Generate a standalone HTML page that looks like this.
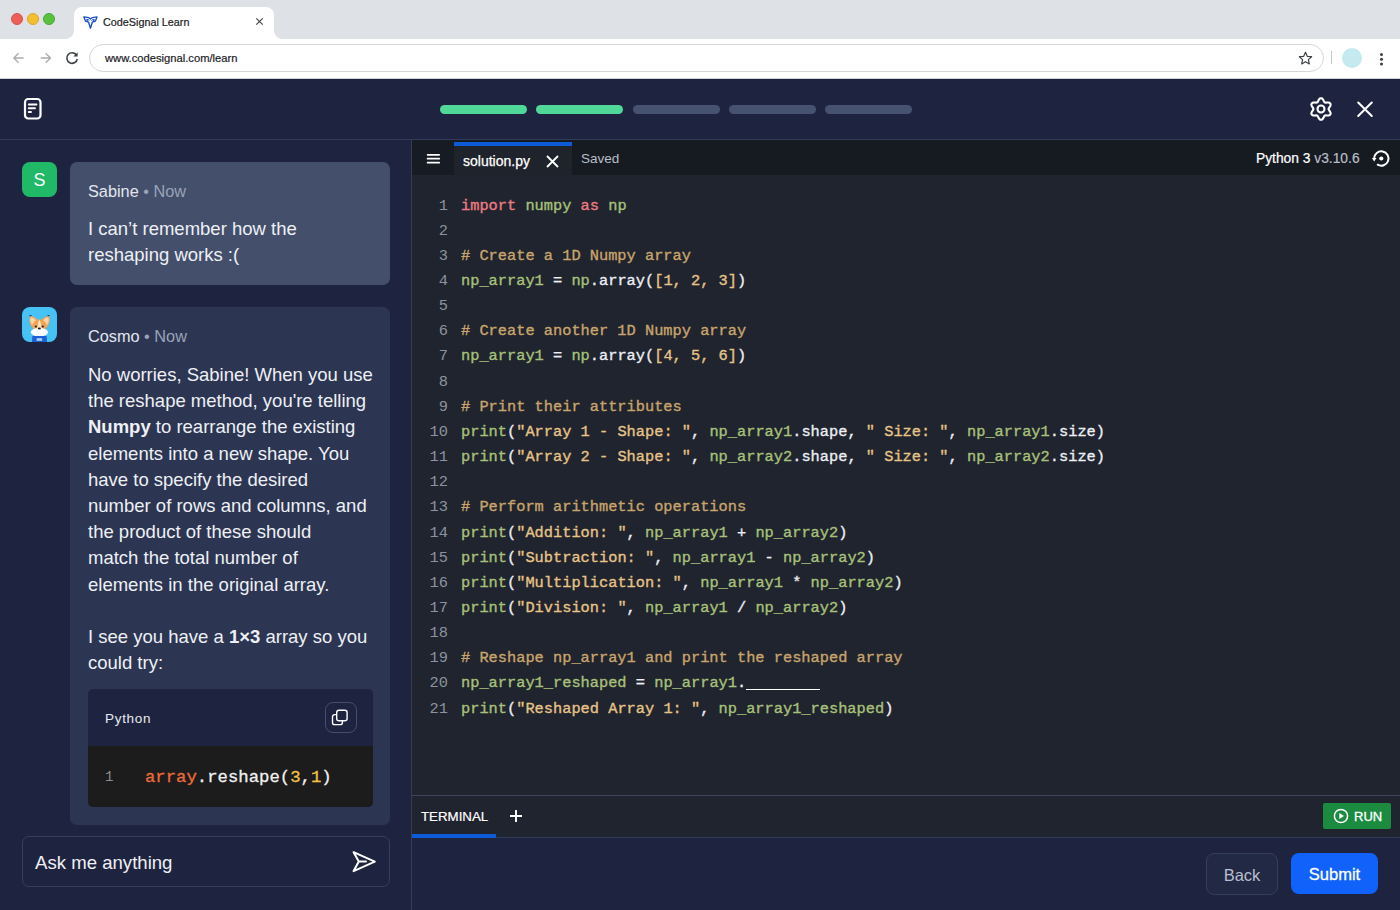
<!DOCTYPE html>
<html><head><meta charset="utf-8">
<style>
*{box-sizing:border-box;margin:0;padding:0}
html,body{width:1400px;height:910px;overflow:hidden;background:#1e2440;font-family:"Liberation Sans",sans-serif}
.abs{position:absolute}
#chrome{position:absolute;left:0;top:0;width:1400px;height:79px;background:#dee1e6}
#toolbar{position:absolute;left:0;top:39px;width:1400px;height:40px;border-bottom:1px solid #cfd2d6}
#tbbg{position:absolute;left:0;top:39px;width:1400px;height:40px;background:#fff}
.dot{position:absolute;width:12px;height:12px;border-radius:50%;top:12.5px}
#tab{position:absolute;left:74px;top:7px;width:200px;height:32px;background:#fff;border-radius:8px 8px 0 0}
#url{position:absolute;left:89px;top:44px;width:1235px;height:28px;border:1px solid #d5d7da;border-radius:14px;background:#fff}
#hdr{position:absolute;left:0;top:79px;width:1400px;height:61px;background:#1e2440;border-bottom:1px solid #323b5a}
.bar{position:absolute;top:105px;width:87px;height:9px;border-radius:5px;background:#475270}
.bar.g{background:#50d899}
#left{position:absolute;left:0;top:140px;width:412px;height:770px;background:#1e2440;border-right:1px solid #363d54}
.av{position:absolute;left:22px;width:35px;height:35px;border-radius:8px}
.bub{position:absolute;left:70px;width:320px;border-radius:7px}
.name{position:absolute;left:18px;font-size:16.3px;color:#e3e6ee;white-space:nowrap}
.name span{color:#9aa3b8}
.msg{position:absolute;left:18px;font-size:18.5px;color:#eef0f5;line-height:26.2px;white-space:nowrap}
#editor{position:absolute;left:412px;top:140px;width:988px;height:655px;background:#1f242e}
#etabs{position:absolute;left:0;top:0;width:988px;height:35px;background:#161a21}
.code{position:absolute;left:0;top:191px;font-family:"Liberation Mono",monospace;font-size:15.33px;line-height:25.15px;white-space:pre}
.ln{position:absolute;left:412px;width:36px;text-align:right;color:#8b919c;font-family:"Liberation Mono",monospace;font-size:15.33px}
#term{position:absolute;left:412px;top:795px;width:988px;height:43px;background:#1f242e;border-top:1px solid #3d455e;border-bottom:1px solid #323b5a}
</style></head><body>
<div id="chrome">
  <div class="dot" style="left:10.5px;background:#ed5f57;border:0.5px solid #d9534c"></div>
  <div class="dot" style="left:27px;background:#f5bd30;border:0.5px solid #dea528"></div>
  <div class="dot" style="left:43px;background:#5ac13c;border:0.5px solid #4aa734"></div>
  <div id="tab">
    <svg class="abs" style="left:9px;top:9px" width="15" height="14" viewBox="0 0 15 14"><path d="M0.9 0.9 L5.8 1.7 L7.45 3.1 L9.1 1.7 L14 0.9 L12.4 5.1 L9.3 6.2 L7.45 12.2 L5.6 6.2 L2.5 5.1 Z" fill="none" stroke="#1b4fc4" stroke-width="1.35" stroke-linejoin="round"/><path d="M6.4 4.6 Q5 2.9 3.6 3.6 Q3.4 4.9 5 4.9 M8.5 4.6 Q9.9 2.9 11.3 3.6 Q11.5 4.9 9.9 4.9" fill="none" stroke="#1b4fc4" stroke-width="1"/></svg>
    <div class="abs" style="left:29px;top:9px;font-size:10.8px;color:#202124;-webkit-text-stroke:0.2px #202124;white-space:nowrap">CodeSignal Learn</div>
    <svg class="abs" style="left:181px;top:10px" width="9" height="9" viewBox="0 0 9 9"><path d="M1.3 1.3L7.7 7.7M7.7 1.3L1.3 7.7" stroke="#3c4043" stroke-width="1.1"/></svg>
  </div>
</div>
<div id="tbbg"></div>
<div class="abs" style="left:66px;top:31px;width:8px;height:8px;background:radial-gradient(circle at 0 0,#dee1e6 7.5px,#fff 8px)"></div>
<div class="abs" style="left:274px;top:31px;width:8px;height:8px;background:radial-gradient(circle at 100% 0,#dee1e6 7.5px,#fff 8px)"></div>
<div id="url"><div class="abs" style="left:15px;top:7px;font-size:11.2px;color:#202124;white-space:nowrap;-webkit-text-stroke:0.2px #202124">www.codesignal.com/learn</div></div>
<div id="toolbar">
  <svg class="abs" style="left:11px;top:12px" width="14" height="14" viewBox="0 0 14 14"><path d="M12.6 7H2.8M7.6 2.2L2.8 7L7.6 11.8" fill="none" stroke="#a8abaf" stroke-width="1.3"/></svg>
  <svg class="abs" style="left:39px;top:12px" width="14" height="14" viewBox="0 0 14 14"><path d="M1.7 7H11.5M6.7 2.2L11.5 7L6.7 11.8" fill="none" stroke="#a8abaf" stroke-width="1.3"/></svg>
  <svg class="abs" style="left:65px;top:12px" width="14" height="14" viewBox="0 0 14 14"><path d="M11.6 4.2 A5.3 5.3 0 1 0 12.3 8" fill="none" stroke="#3c4043" stroke-width="1.6"/><path d="M12.6 1.2 V5.4 H8.4 Z" fill="#3c4043"/></svg>
  <svg class="abs" style="left:1298px;top:12px" width="15" height="15" viewBox="0 0 15 15"><path d="M7.5 1.3 L9.3 5.3 L13.6 5.7 L10.4 8.6 L11.3 12.9 L7.5 10.7 L3.7 12.9 L4.6 8.6 L1.4 5.7 L5.7 5.3 Z" fill="none" stroke="#3c4043" stroke-width="1.2" stroke-linejoin="round"/></svg>
  <div class="abs" style="left:1331px;top:12px;width:1px;height:13px;background:#c4c7ca"></div>
  <div class="abs" style="left:1342px;top:9px;width:20px;height:20px;border-radius:50%;background:#c4eaef"></div>
  <div class="abs" style="left:1380px;top:13.5px;width:3px;height:3px;border-radius:50%;background:#3c4043;box-shadow:0 4.7px 0 #3c4043,0 9.4px 0 #3c4043"></div>
</div>

<div id="hdr">
  <svg class="abs" style="left:22px;top:18px" width="22" height="24" viewBox="0 0 22 24"><rect x="3" y="2" width="15.5" height="19.5" rx="3.2" fill="none" stroke="#fff" stroke-width="2.2"/><path d="M6.8 7.5H14.5M6.8 11.3H13M6.8 15H9" stroke="#fff" stroke-width="1.9" stroke-linecap="round"/></svg>
  <svg class="abs" style="left:1307px;top:16.3px" width="28" height="28" viewBox="0 0 28 28"><path d="M21.60 14.00 L21.67 13.60 L21.86 13.17 L22.16 12.71 L22.52 12.19 L22.89 11.62 L23.22 11.00 L23.47 10.37 L23.59 9.73 L23.55 9.13 L23.35 8.60 L22.99 8.16 L22.49 7.83 L21.88 7.62 L21.20 7.51 L20.51 7.49 L19.83 7.53 L19.20 7.58 L18.65 7.60 L18.18 7.56 L17.80 7.42 L17.49 7.16 L17.22 6.78 L16.96 6.29 L16.69 5.72 L16.38 5.11 L16.02 4.52 L15.59 3.98 L15.10 3.56 L14.56 3.29 L14.00 3.20 L13.44 3.29 L12.90 3.56 L12.41 3.98 L11.98 4.52 L11.62 5.11 L11.31 5.72 L11.04 6.29 L10.78 6.78 L10.51 7.16 L10.20 7.42 L9.82 7.56 L9.35 7.60 L8.80 7.58 L8.17 7.53 L7.49 7.49 L6.80 7.51 L6.12 7.62 L5.51 7.83 L5.01 8.16 L4.65 8.60 L4.45 9.13 L4.41 9.73 L4.53 10.37 L4.78 11.00 L5.11 11.62 L5.48 12.19 L5.84 12.71 L6.14 13.17 L6.33 13.60 L6.40 14.00 L6.33 14.40 L6.14 14.83 L5.84 15.29 L5.48 15.81 L5.11 16.38 L4.78 17.00 L4.53 17.63 L4.41 18.27 L4.45 18.87 L4.65 19.40 L5.01 19.84 L5.51 20.17 L6.12 20.38 L6.80 20.49 L7.49 20.51 L8.17 20.47 L8.80 20.42 L9.35 20.40 L9.82 20.44 L10.20 20.58 L10.51 20.84 L10.78 21.22 L11.04 21.71 L11.31 22.28 L11.62 22.89 L11.98 23.48 L12.41 24.02 L12.90 24.44 L13.44 24.71 L14.00 24.80 L14.56 24.71 L15.10 24.44 L15.59 24.02 L16.02 23.48 L16.38 22.89 L16.69 22.28 L16.96 21.71 L17.22 21.22 L17.49 20.84 L17.80 20.58 L18.18 20.44 L18.65 20.40 L19.20 20.42 L19.83 20.47 L20.51 20.51 L21.20 20.49 L21.88 20.38 L22.49 20.17 L22.99 19.84 L23.35 19.40 L23.55 18.87 L23.59 18.27 L23.47 17.63 L23.22 17.00 L22.89 16.38 L22.52 15.81 L22.16 15.29 L21.86 14.83 L21.67 14.40Z" fill="none" stroke="#fff" stroke-width="2.1" stroke-linejoin="round"/><circle cx="14" cy="14" r="3.5" fill="none" stroke="#fff" stroke-width="2.1"/></svg>
  <svg class="abs" style="left:1354px;top:19.3px" width="22" height="22" viewBox="0 0 22 22"><path d="M4.2 4.5L17.8 18M17.8 4.5L4.2 18" stroke="#fff" stroke-width="2" stroke-linecap="round"/></svg>
</div>
<div class="bar g" style="left:440px"></div>
<div class="bar g" style="left:536.3px"></div>
<div class="bar" style="left:632.6px"></div>
<div class="bar" style="left:728.9px"></div>
<div class="bar" style="left:825.2px"></div>
<div id="left">
  <div class="av" style="top:22px;background:#20b968"><div class="abs" style="left:0;width:35px;top:8px;text-align:center;color:#fff;font-size:18px">S</div></div>
  <div class="bub" style="top:22px;height:123px;background:#434f6b">
    <div class="name" style="top:20px">Sabine <span>&bull; Now</span></div>
    <div class="msg" style="top:54px">I can&rsquo;t remember how the<br>reshaping works :(</div>
  </div>
  <div class="av" style="top:167px;background:#46c3f4;overflow:hidden">
    <svg width="35" height="35" viewBox="0 0 35 35">
      <path d="M8.1 8.5 Q5.6 15 10.7 21 L15.8 12.8 Q12.2 9.4 8.1 8.5 Z" fill="#f0a455"/>
      <path d="M26.9 8.5 Q29.4 15 24.3 21 L19.2 12.8 Q22.8 9.4 26.9 8.5 Z" fill="#f0a455"/>
      <path d="M8.8 10.3 Q7.2 15 10.8 18.8 L13.8 13.2 Q11.6 10.9 8.8 10.3 Z" fill="#fcd6a8"/>
      <path d="M26.2 10.3 Q27.8 15 24.2 18.8 L21.2 13.2 Q23.4 10.9 26.2 10.3 Z" fill="#fcd6a8"/>
      <path d="M7.6 9.2 Q8.2 8 9.6 8.8 M27.4 9.2 Q26.8 8 25.4 8.8" stroke="#263f7e" stroke-width="1.1" fill="none"/>
      <ellipse cx="17.5" cy="19" rx="7.2" ry="6.4" fill="#f0a455"/>
      <path d="M17.5 12.6 Q15.6 16 15.4 21.5 L19.6 21.5 Q19.4 16 17.5 12.6 Z" fill="#fde6c8"/>
      <ellipse cx="17.4" cy="25.2" rx="8.6" ry="4.2" fill="#fff"/>
      <circle cx="13.9" cy="19.5" r="1.1" fill="#1d1d1d"/><circle cx="20.8" cy="19.5" r="1.1" fill="#1d1d1d"/>
      <ellipse cx="17.4" cy="21.5" rx="1.5" ry="1.05" fill="#1d1d1d"/>
      <path d="M10 35 L10.4 28.9 L24.6 28.9 L25 35 Z" fill="#1d5fd4"/>
      <rect x="14.6" y="31.2" width="5.6" height="2.6" rx="0.6" fill="#b5d3ff"/>
    </svg>
  </div>
  <div class="bub" style="top:167px;height:518px;background:#2c3652">
    <div class="name" style="top:20px">Cosmo <span>&bull; Now</span></div>
    <div class="msg" style="top:55px">No worries, Sabine! When you use<br>the reshape method, you're telling<br><b>Numpy</b> to rearrange the existing<br>elements into a new shape. You<br>have to specify the desired<br>number of rows and columns, and<br>the product of these should<br>match the total number of<br>elements in the original array.<br><br>I see you have a <b>1&times;3</b> array so you<br>could try:</div>
    <div class="abs" style="left:18px;top:382px;width:285px;height:118px;border-radius:5px;overflow:hidden;background:#1e2440">
      <div class="abs" style="left:17px;top:21.5px;font-size:13.5px;color:#e8eaf0;letter-spacing:0.7px">Python</div>
      <div class="abs" style="left:237px;top:13px;width:32px;height:31px;border:1px solid #454e6a;border-radius:8px">
        <svg class="abs" style="left:4px;top:5px" width="20" height="20" viewBox="0 0 20 20"><rect x="2.5" y="6.6" width="9.9" height="10" rx="2.2" fill="none" stroke="#fff" stroke-width="1.4"/><rect x="6.7" y="2.3" width="10.4" height="10.4" rx="2.2" fill="#1e2440" stroke="#fff" stroke-width="1.4"/></svg>
      </div>
      <div class="abs" style="left:0;top:57px;width:285px;height:61px;background:#1c1c1d">
        <div class="abs" style="left:17px;top:23px;font-family:'Liberation Mono',monospace;font-size:14px;color:#8a8d93">1</div>
        <div class="abs" style="left:57px;top:22px;font-family:'Liberation Mono',monospace;font-size:17.3px;color:#f0f0f0;white-space:pre;-webkit-text-stroke:0.3px currentColor"><span style="color:#ea6c38">array</span>.reshape(<span style="color:#f5c04a">3</span>,<span style="color:#f5c04a">1</span>)</div>
      </div>
    </div>
  </div>
  <div class="abs" style="left:22px;top:696px;width:368px;height:51px;border:1px solid #353e5c;border-radius:7px;background:#1e2440">
    <div class="abs" style="left:12px;top:14.5px;font-size:18.6px;color:#eef0f5">Ask me anything</div>
    <svg class="abs" style="left:327px;top:13px" width="28" height="26" viewBox="0 0 28 26"><path d="M3.6 2.2 L24.8 11.6 L3.6 21.1 L8.8 11.6 Z M8.8 11.6 H16" fill="none" stroke="#fff" stroke-width="2" stroke-linejoin="round" stroke-linecap="round"/></svg>
  </div>
</div>
<div id="editor"><div id="etabs">
  <div class="abs" style="left:0;top:0;width:41px;height:35px;background:#171b23"></div>
  <svg class="abs" style="left:14px;top:13px" width="15" height="12" viewBox="0 0 15 12"><path d="M1.6 1.8H13.2M1.6 5.7H13.2M1.6 9.7H13.2" stroke="#fff" stroke-width="1.7" stroke-linecap="round"/></svg>
  <div class="abs" style="left:42px;top:2px;width:118px;height:33px;background:#1e232c"></div>
  <div class="abs" style="left:42px;top:2px;width:118px;height:4px;background:#0e5bd8"></div>
  <div class="abs" style="left:51px;top:12.5px;font-size:14px;color:#fff;white-space:nowrap;-webkit-text-stroke:0.25px #fff">solution.py</div>
  <svg class="abs" style="left:133px;top:13.5px" width="15" height="15" viewBox="0 0 15 15"><path d="M2 2L13 13M13 2L2 13" stroke="#fff" stroke-width="1.8"/></svg>
  <div class="abs" style="left:169px;top:11px;font-size:13.5px;color:#b9bec8;white-space:nowrap">Saved</div>
  <div class="abs" style="left:844px;top:11px;font-size:13.8px;color:#fff;white-space:nowrap;-webkit-text-stroke:0.2px currentColor">Python 3 <span style="color:#b9bec8">v3.10.6</span></div>
  <svg class="abs" style="left:958px;top:8px" width="22" height="22" viewBox="0 0 22 22"><path d="M7.7 16.7 A7.2 7.2 0 1 0 4.13 10.4" fill="none" stroke="#fff" stroke-width="2" stroke-linecap="round"/><path d="M1.9 9.9 L6.5 9.9 L4.15 13.6 Z" fill="#fff"/><circle cx="11.3" cy="10.5" r="2.1" fill="#fff"/></svg>
</div>
  <div class="abs" style="left:0;top:53.5px;width:36px;text-align:right;white-space:pre;font-family:'Liberation Mono',monospace;font-size:15.33px;line-height:25.15px;color:#8d939e">1
2
3
4
5
6
7
8
9
10
11
12
13
14
15
16
17
18
19
20
21</div>
  <div class="abs" style="left:49px;top:53.5px;white-space:pre;font-family:'Liberation Mono',monospace;-webkit-text-stroke:0.35px currentColor;font-size:15.33px;line-height:25.15px;color:#eceff4"><span style="color:#ee7b82">import</span> <span style="color:#a8c17a">numpy</span> <span style="color:#ee7b82">as</span> <span style="color:#a8c17a">np</span>

<span style="color:#c9a46c"># Create a 1D Numpy array</span>
<span style="color:#a8c17a">np_array1</span><span style="color:#eceff4"> = </span><span style="color:#a8c17a">np</span><span style="color:#eceff4">.array(</span><span style="color:#e6c387">[1, 2, 3]</span><span style="color:#eceff4">)</span>

<span style="color:#c9a46c"># Create another 1D Numpy array</span>
<span style="color:#a8c17a">np_array1</span><span style="color:#eceff4"> = </span><span style="color:#a8c17a">np</span><span style="color:#eceff4">.array(</span><span style="color:#e6c387">[4, 5, 6]</span><span style="color:#eceff4">)</span>

<span style="color:#c9a46c"># Print their attributes</span>
<span style="color:#a8c17a">print</span><span style="color:#eceff4">(</span><span style="color:#e6c387">"Array 1 - Shape: "</span><span style="color:#eceff4">, </span><span style="color:#a8c17a">np_array1</span><span style="color:#eceff4">.shape, </span><span style="color:#e6c387">" Size: "</span><span style="color:#eceff4">, </span><span style="color:#a8c17a">np_array1</span><span style="color:#eceff4">.size)</span>
<span style="color:#a8c17a">print</span><span style="color:#eceff4">(</span><span style="color:#e6c387">"Array 2 - Shape: "</span><span style="color:#eceff4">, </span><span style="color:#a8c17a">np_array2</span><span style="color:#eceff4">.shape, </span><span style="color:#e6c387">" Size: "</span><span style="color:#eceff4">, </span><span style="color:#a8c17a">np_array2</span><span style="color:#eceff4">.size)</span>

<span style="color:#c9a46c"># Perform arithmetic operations</span>
<span style="color:#a8c17a">print</span><span style="color:#eceff4">(</span><span style="color:#e6c387">"Addition: "</span><span style="color:#eceff4">, </span><span style="color:#a8c17a">np_array1</span><span style="color:#eceff4"> + </span><span style="color:#a8c17a">np_array2</span><span style="color:#eceff4">)</span>
<span style="color:#a8c17a">print</span><span style="color:#eceff4">(</span><span style="color:#e6c387">"Subtraction: "</span><span style="color:#eceff4">, </span><span style="color:#a8c17a">np_array1</span><span style="color:#eceff4"> - </span><span style="color:#a8c17a">np_array2</span><span style="color:#eceff4">)</span>
<span style="color:#a8c17a">print</span><span style="color:#eceff4">(</span><span style="color:#e6c387">"Multiplication: "</span><span style="color:#eceff4">, </span><span style="color:#a8c17a">np_array1</span><span style="color:#eceff4"> * </span><span style="color:#a8c17a">np_array2</span><span style="color:#eceff4">)</span>
<span style="color:#a8c17a">print</span><span style="color:#eceff4">(</span><span style="color:#e6c387">"Division: "</span><span style="color:#eceff4">, </span><span style="color:#a8c17a">np_array1</span><span style="color:#eceff4"> / </span><span style="color:#a8c17a">np_array2</span><span style="color:#eceff4">)</span>

<span style="color:#c9a46c"># Reshape np_array1 and print the reshaped array</span>
<span style="color:#a8c17a">np_array1_reshaped</span><span style="color:#eceff4"> = </span><span style="color:#a8c17a">np_array1</span><span style="color:#eceff4">.</span><span style="display:inline-block;width:74px;height:1px;background:#fff;vertical-align:-3px"></span>
<span style="color:#a8c17a">print</span><span style="color:#eceff4">(</span><span style="color:#e6c387">"Reshaped Array 1: "</span><span style="color:#eceff4">, </span><span style="color:#a8c17a">np_array1_reshaped</span><span style="color:#eceff4">)</span></div>
</div>
<div id="term">
  <div class="abs" style="left:9px;top:13px;font-size:13.3px;color:#fff;white-space:nowrap;-webkit-text-stroke:0.2px #fff">TERMINAL</div>
  <div class="abs" style="left:0;top:38px;width:84px;height:4px;background:#0e5bd8"></div>
  <svg class="abs" style="left:96px;top:12px" width="16" height="16" viewBox="0 0 16 16"><path d="M8 2V14M2 8H14" stroke="#fff" stroke-width="1.9"/></svg>
  <div class="abs" style="left:911px;top:7px;width:68px;height:26px;border-radius:2px;background:#1b8b40">
    <svg class="abs" style="left:10px;top:5px" width="16" height="16" viewBox="0 0 16 16"><circle cx="8" cy="8" r="6.6" fill="none" stroke="#fff" stroke-width="1.5"/><path d="M6.3 5 L11 8 L6.3 11 Z" fill="#fff"/></svg>
    <div class="abs" style="left:31px;top:5.5px;font-size:13px;color:#fff;-webkit-text-stroke:0.3px #fff">RUN</div>
  </div>
</div>
<div class="abs" style="left:1206px;top:853px;width:72px;height:42px;border:1px solid #353e5c;border-radius:8px;background:#222944"><div class="abs" style="left:0;width:70px;top:12px;text-align:center;font-size:16.5px;color:#b8bfcf">Back</div></div>
<div class="abs" style="left:1291px;top:853px;width:87px;height:41px;border-radius:8px;background:#1062fb"><div class="abs" style="left:0;width:87px;top:12px;text-align:center;font-size:16.5px;color:#fff;-webkit-text-stroke:0.3px #fff">Submit</div></div>
</body></html>
